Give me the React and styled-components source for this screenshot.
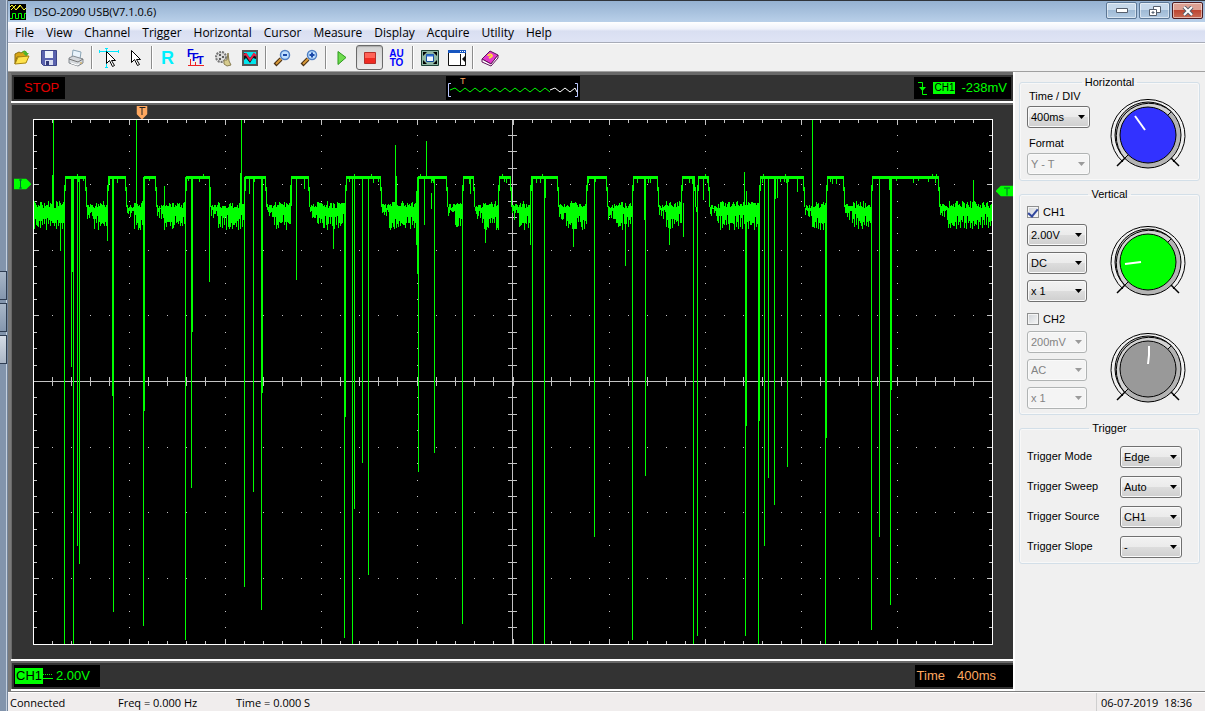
import React, { useState } from 'react';
import styled, { createGlobalStyle, css } from 'styled-components';

const GlobalStyle = createGlobalStyle`
  * { box-sizing: border-box; }
  body { margin: 0; background: #f0f0f0; }
  button, select, input { font: inherit; margin: 0; }
`;

const uiFont = '"Open Sans", "Noto Sans", sans-serif';
const panelFont = '"Liberation Sans", Arial, sans-serif';
const green = '#00ff00';

/* ---------- window frame ---------- */

const Screen = styled.div`
  display: flex;
  min-height: 100vh;
  font: 12px/16px ${uiFont};
  color: #000;
`;

const DesktopEdge = styled.div`
  flex: 0 0 8px;
  display: flex;
  flex-direction: column;
  gap: 3px;
  padding-top: 271px;
  background: linear-gradient(90deg, #8294ac 0 6px, #c3cfde 6px 7px, #74859c 7px);
`;

const EdgeTab = styled.span`
  height: 29px;
  width: 7px;
  border: 1px solid #2f3d52;
  border-left: 0;
  background: ${props => props.$lit ? 'linear-gradient(#d5dce6, #aab6c6)' : 'linear-gradient(#a9b7c8, #8496ae)'};
`;

const Window = styled.div`
  flex: 1;
  min-width: 0;
  display: flex;
  flex-direction: column;
  background: #f0f0f0;
`;

const TitleBar = styled.header`
  display: flex;
  align-items: center;
  gap: 8px;
  height: 22px;
  padding: 0 2px;
  border-top: 1px solid #30343a;
  background: linear-gradient(#95b1d1, #b9d0e9);
`;

const Title = styled.h1`
  flex: 1;
  margin: 0;
  font-size: 11px;
  font-weight: 400;
`;

const WindowButtons = styled.div`
  display: flex;
  gap: 2px;
  padding-bottom: 2px;
`;

const WindowButton = styled.button`
  display: flex;
  align-items: center;
  justify-content: center;
  width: 31px;
  height: 17px;
  padding: 0;
  border: 1px solid ${props => props.$close ? '#4c1a20' : '#5c7795'};
  border-radius: 2px;
  box-shadow: inset 0 0 0 1px rgba(255, 255, 255, 0.5);
  background: ${props => props.$close
    ? 'linear-gradient(#dca093 0 45%, #bd4632 50%, #c96b55)'
    : 'linear-gradient(#c6d8ea 0 45%, #9fbad5 50%, #b3cbe3)'};
`;

const MenuBar = styled.nav`
  display: flex;
  align-items: center;
  gap: 12px;
  height: 21px;
  padding: 1px 7px 0;
  background: linear-gradient(#fff, #eef1fa 35%, #d9dff1 45%, #dfe4f5);
  border-bottom: 1px solid #a8acb8;
`;

const MenuItem = styled.button`
  padding: 0;
  border: 0;
  background: none;
  color: #000;
`;

const ToolBar = styled.div`
  display: flex;
  align-items: center;
  height: 28px;
  border-top: 1px solid #fff;
`;

const ToolButton = styled.button`
  display: flex;
  align-items: center;
  justify-content: center;
  width: 27px;
  height: 25px;
  padding: 0;
  border: 1px solid transparent;
  border-radius: 3px;
  background: none;
  svg { overflow: visible; }
  ${props => props.$pressed && css`
    border-color: #6a6a6a;
    background: linear-gradient(#d2d2d2, #ececec);
    box-shadow: inset 0 1px 1px #aaa;
  `}
`;

const ToolText = styled.span`
  font: bold 10px/9px ${panelFont};
  color: #0000ff;
  text-align: center;
`;

const Separator = styled.span`
  width: 6px;
  height: 23px;
  background: linear-gradient(90deg, transparent 2px, #8c8c8c 2px 3px, #fff 3px 4px, transparent 4px);
`;

/* ---------- scope ---------- */

const Body = styled.main`
  flex: 1;
  display: grid;
  grid-template-columns: minmax(0, 1fr) 192px;
  border-top: 1px solid #a0a0a0;
`;

const Scope = styled.section`
  display: flex;
  flex-direction: column;
  gap: 2px;
  padding-bottom: 2px;
  border-top: 1px solid #696969;
  border-left: 3px solid #7a7a7a;
  background: #fff;
  font: 13px/16px ${panelFont};
`;

const Strip = styled.div`
  display: grid;
  grid-template-columns: 1fr auto 1fr;
  align-items: center;
  height: 28px;
  padding: 0 ${props => props.$right || 0}px 0 2px;
  border-top: 2px solid #696969;
  border-left: 1px solid #696969;
  background: #333;
  > :last-child { grid-column: 3; justify-self: end; }
`;

const Readout = styled.div`
  display: flex;
  align-items: center;
  justify-self: start;
  height: 22px;
  gap: ${props => props.$gap || 0}px;
  padding: 0 ${props => props.$padRight || 0}px 0 ${props => props.$padLeft || 0}px;
  background: #000;
  color: ${props => props.$color || green};
`;

const Badge = styled.span`
  background: ${green};
  color: #000;
  padding: 0 1px;
  font-size: ${props => props.$small ? 10 : 13}px;
  line-height: ${props => props.$small ? 12 : 16}px;
`;

const PlotPanel = styled.div`
  flex: 1;
  display: flex;
  padding: 14px 20px 14px 21px;
  border-top: 2px solid #696969;
  border-left: 1px solid #696969;
  background: #333;
`;

const Plot = styled.div`
  position: relative;
  flex: 1;
  align-self: flex-start;
  background: #000;
`;

const Trace = styled.svg`
  display: block;
  width: 100%;
  height: 526px;
`;

// level and time flags ride on the plot's edges
const Flag = styled.svg`
  position: absolute;
  ${props => props.$edge === 'top' && css`left: 109px; bottom: 100%; transform: translateX(-50%);`}
  ${props => props.$edge === 'left' && css`right: 100%; top: 65px; margin-right: 2px; transform: translateY(-50%);`}
  ${props => props.$edge === 'right' && css`left: 100%; top: 72px; margin-left: 3px; transform: translateY(-50%);`}
`;

/* ---------- side panel ---------- */

const Side = styled.aside`
  display: flex;
  flex-direction: column;
  gap: 6px;
  padding: 3px 5px 0 4px;
  border-left: 2px solid #fff;
  font: 11px/14px ${panelFont};
`;

const Group = styled.fieldset`
  min-width: 0;
  margin: 0;
  padding: ${props => props.$top || 0}px 7px 5px;
  border: 1px solid #d3dfe8;
  border-radius: 3px;
  box-shadow: inset 0 0 0 1px #f8f8f8;
`;

const Legend = styled.legend`
  margin: 0 auto;
  padding: 0 3px;
`;

const Block = styled.div`
  display: flex;
  justify-content: space-between;
  align-items: flex-end;
  padding-right: 6px;
  & + & { margin-top: 11px; }
`;

const Stack = styled.div`
  display: flex;
  flex-direction: column;
  gap: ${props => props.$gap}px;
`;

const Field = styled.div`
  display: flex;
  flex-direction: column;
  gap: 3px;
  label { padding-left: 2px; }
`;

const CheckRow = styled.label`
  display: flex;
  align-items: center;
  gap: 4px;
  height: 12px;
`;

const CheckBox = styled.input`
  appearance: none;
  display: grid;
  place-items: center;
  width: 12px;
  height: 12px;
  border: 1px solid #8e8f8f;
  box-shadow: inset 0 0 0 1px #f4f4f4;
  background: linear-gradient(135deg, #cfd3d8, #f6f6f6);
  &:checked::before {
    content: '';
    width: 4px;
    height: 8px;
    margin-bottom: 2px;
    border: solid #31479e;
    border-width: 0 2px 2px 0;
    transform: rotate(40deg);
  }
`;

const SelectBox = styled.span`
  display: grid;
  align-items: center;
  width: ${props => props.$width}px;
  > * { grid-area: 1 / 1; }
  > svg { justify-self: end; margin-right: 5px; pointer-events: none; }
`;

const Select = styled.select`
  appearance: none;
  width: 100%;
  height: 22px;
  padding: 0 14px 0 3px;
  border: 1px solid #707070;
  border-radius: 3px;
  box-shadow: inset 0 0 0 1px #fafafa;
  background: linear-gradient(#f2f2f2, #ebebeb 50%, #dddddd 50%, #cfcfcf);
  color: #000;
  &:disabled {
    opacity: 1;
    border-color: #b0b3b3;
    background: #f4f4f4;
    color: #838383;
  }
`;

const TriggerRow = styled.div`
  display: flex;
  justify-content: space-between;
  align-items: center;
  padding-right: 10px;
  height: 22px;
  label { padding-bottom: 2px; }
`;

const StatusBar = styled.footer`
  display: flex;
  align-items: center;
  height: 20px;
  padding-left: 2px;
  border-top: 1px solid #7c7c7c;
  box-shadow: inset 0 1px 0 #fff;
  background: #f0eded;
  font-size: 11px;
`;

const Status = styled.span`
  width: ${props => props.$width}px;
  padding-top: 2px;
`;

const Clock = styled.time`
  width: 109px;
  margin-left: auto;
  padding: 2px 0 0 4px;
  border-left: 1px solid #cfcfcf;
  white-space: pre;
`;

/* ---------- trace data ---------- */

const W = 960;
const H = 526;

const highs = [
  [32, 52], [75, 92], [111, 122], [153, 176], [212, 232], [258, 275],
  [313, 347], [385, 413], [430, 440], [466, 477], [498, 524], [554, 573],
  [600, 624], [649, 661], [665, 675], [727, 770], [794, 810], [839, 905]
];

// [x, from, to]
const spikes = [
  [20, 0, 90], [19, 56, 90], [103, 0, 90], [208, 0, 90], [207, 54, 90], [362, 26, 90],
  [363, 57, 90], [393, 22, 58], [711, 53, 90], [713, 72, 90], [779, 0, 90], [940, 61, 90],
  [131, 67, 90], [398, 74, 90],
  [27, 84, 132], [31, 84, 525], [38, 58, 248], [39, 58, 153], [40, 58, 525], [44, 58, 427],
  [46, 58, 445], [74, 84, 122], [79, 58, 277], [80, 58, 493], [110, 58, 507], [111, 58, 292],
  [152, 58, 521], [158, 58, 369], [159, 58, 213], [176, 58, 163], [211, 58, 468],
  [216, 58, 75], [220, 58, 373], [228, 58, 491], [229, 58, 274], [258, 58, 87], [263, 58, 161],
  [271, 58, 70], [300, 84, 130], [311, 84, 519], [312, 84, 298], [319, 58, 525], [321, 58, 390],
  [329, 58, 344], [335, 58, 456], [383, 72, 126], [384, 58, 155], [385, 58, 353], [391, 58, 106],
  [401, 58, 334], [429, 78, 505], [437, 58, 75], [452, 84, 124], [497, 84, 126], [499, 58, 525],
  [511, 58, 525], [512, 58, 79], [540, 84, 128], [561, 58, 418], [592, 84, 147], [599, 78, 521],
  [611, 58, 101], [612, 58, 357], [636, 84, 126], [650, 84, 118], [660, 58, 525], [664, 88, 517],
  [670, 58, 81], [712, 90, 517], [713, 90, 307], [725, 84, 525], [726, 84, 302], [731, 58, 427],
  [735, 58, 359], [741, 58, 386], [742, 58, 80], [744, 58, 79], [754, 58, 348], [764, 58, 73],
  [792, 84, 525], [793, 84, 319], [838, 84, 511], [846, 58, 418], [856, 58, 71], [857, 58, 486],
  [858, 58, 271]
];

function buildTrace() {
  let seed = 2090;
  const rand = () => {
    seed = (seed * 16807) % 2147483647;
    return seed / 2147483647;
  };
  let d = '';
  let sinceHigh = 20;
  for (let x = 1; x < W - 1; x++) {
    const high = highs.find(([a, b]) => x >= a && x <= b);
    let top = 57;
    let bottom = 60;
    if (high) {
      if (x === high[0] || x === high[1]) bottom = 72;
      else if (rand() > 0.88) bottom = 62 + Math.round(rand() * 3);
      else if (rand() > 0.95) top = 55;
      sinceHigh = 0;
    } else {
      sinceHigh++;
      const rising = highs.some(([a]) => a - x === 1);
      top = 82 + Math.round(rand() * 7);
      bottom = x % 2 || rand() > 0.7 ? 103 + Math.round(rand() * 8) : 95 + Math.round(rand() * 10);
      if (sinceHigh === 1) { top = 68; bottom = 88; }
      else if (sinceHigh < 9) { top = 85 + Math.round(rand() * 4); bottom = 90 + Math.round(rand() * 11); }
      if (rising) top = 66;
    }
    d += `M${x}.5 ${top}V${bottom}`;
  }
  spikes.forEach(([x, from, to]) => { d += `M${x}.5 ${from}V${to}`; });
  return d;
}

function buildGrid() {
  let ticks = '';
  let dots = '';
  const cols = Array.from({ length: 49 }, (_, i) => Math.floor((i + 1) * 19.2));
  const rows = Array.from({ length: 31 }, (_, i) => Math.floor((i + 1) * 16.41));
  cols.forEach((x, i) => {
    const len = (i + 1) % 5 === 0 ? 6 : 4;
    ticks += `M${x}.5 0v${len}M${x}.5 ${H}v-${len}M${x}.5 258v9`;
    rows.forEach((y, j) => {
      if ((i + 1) % 5 === 0 || (j + 1) % 4 === 0) dots += `M${x} ${y}.5h1`;
    });
  });
  rows.forEach((y, j) => {
    const len = (j + 1) % 4 === 0 ? 6 : 4;
    ticks += `M0 ${y}.5h${len}M${W} ${y}.5h-${len}M475 ${y}.5h9`;
  });
  return ticks + dots;
}

const tracePath = buildTrace();
const gridPath = buildGrid();

const zigzag = (from, to) => {
  let d = `M${from} 14`;
  for (let x = from, i = 0; x < to; x += 5, i++) d += `L${Math.min(x + 5, to)} ${i % 2 ? 16 : 12}`;
  return d;
};

/* ---------- icons ---------- */

const Icon = ({ children, size = 18 }) => (
  <svg width={size} height={size} viewBox={`0 0 ${size} ${size}`} aria-hidden="true">{children}</svg>
);

const pointer = 'M.5 .5v12l3-3 3 6 2-1-3-5h4z';

const icons = {
  open: <Icon><path d="M2 5l4-2 2 1 4-2 2 3v3H4L2 15z" fill="#d9a514" stroke="#8a6d10" /><path d="M2 15L5 8l11-1-3 7z" fill="#ffe34d" stroke="#a8860f" /><path d="M8 4c3-4 6-2 6 0h2l-3 3-3-3h2c-1-1-2-1-4 0z" fill="#4bb52c" /></Icon>,
  save: <Icon><path d="M1.500 1.500h15v15h-13l-2-2z" fill="#5a62ae" stroke="#3d4588" /><path d="M5 2h8v7H5z" fill="#eef2fb" /><path d="M5 11h8v5H5z" fill="#d7dcf0" /><path d="M6 12h3v4H6z" fill="#343b78" /></Icon>,
  print: <Icon><path d="M5 9L6 1l8 2-1 7z" fill="#e9f4fc" stroke="#8aa4b5" /><path d="M2 9l4-2 10 3v4l-5 3-9-3z" fill="#d4d8dc" stroke="#858b91" /><path d="M2 10l9 3 5-3" fill="none" stroke="#777" /><path d="M4 14l6 2 2-1" stroke="#fff" fill="none" /><path d="M13 14h2" stroke="#d3a13a" /></Icon>,
  cross: <Icon size={20}><path d="M0 3.500h20M7.500 0v20M6 .5h3M6 19.500h3M.5 2v3M19.500 2v3" stroke="#00e8ff" /><path d={pointer} transform="translate(7 3)" fill="#fff" stroke="#000" /></Icon>,
  arrow: <Icon><path d={pointer} transform="translate(4 1)" fill="#fff" stroke="#000" /></Icon>,
  r: <Icon><text x="1" y="15" fontFamily="Liberation Sans, Arial, sans-serif" fontSize="18" fontWeight="bold" fill="#00f0ff">R</text></Icon>,
  fft: <Icon><g fontFamily="Liberation Sans, Arial, sans-serif" fontSize="11" fontWeight="bold" fill="#0000e0"><text x="0" y="8">F</text><text x="5" y="12">F</text><text x="10" y="15">T</text></g><path d="M1 16.500h16M3.500 10v6M8.500 13v3" stroke="#e22" /></Icon>,
  gear: <Icon><circle cx="7" cy="8" r="5" fill="#ddd" stroke="#777" strokeWidth="2" strokeDasharray="2 1" /><circle cx="6" cy="6" r="1" fill="#333" /><circle cx="9" cy="8" r="1" fill="#333" /><circle cx="6" cy="10" r="1" fill="#333" /><path d="M10 11h3l1-7 1 8 2 4-4 1-3-2z" fill="#d7cc8e" stroke="#887d52" /></Icon>,
  chart: <Icon><path d="M2 2h14v14H2z" fill="#00e5ee" stroke="#555" strokeWidth="2" /><path d="M3 4l2 0 4 5 4-5 2 3v3l-3-1-3 5-4-5-2 2z" fill="#111" /><path d="M3 6l2-1 4 6 4-6 2 2" fill="none" stroke="#e8264a" strokeWidth="2" /></Icon>,
  zoomOut: <Icon><path d="M1 16l6-6" stroke="#4b3115" strokeWidth="4" /><path d="M2 15l5-5" stroke="#d99a38" strokeWidth="2" /><circle cx="11" cy="6" r="4.500" fill="#bfe0ff" stroke="#4f7fc4" strokeWidth="1.500" /><path d="M9 6h4" stroke="#1a49a8" strokeWidth="2" /></Icon>,
  zoomIn: <Icon><path d="M1 16l6-6" stroke="#4b3115" strokeWidth="4" /><path d="M2 15l5-5" stroke="#d99a38" strokeWidth="2" /><circle cx="11" cy="6" r="4.500" fill="#bfe0ff" stroke="#4f7fc4" strokeWidth="1.500" /><path d="M8.500 6h5M11 3.500v5" stroke="#1a49a8" strokeWidth="2" /></Icon>,
  play: <Icon><path d="M4 2.500l8 6-8 7z" fill="#6fdc4e" stroke="#2c9a1d" /></Icon>,
  stop: <Icon><path d="M3.500 3.500h11v11h-11z" fill="#ef2b22" stroke="#b5302a" /><path d="M4 4h10v5H4z" fill="#ff6357" /></Icon>,
  full: <Icon><path d="M.5 1.500h17v15H.5z" fill="#8fb7a4" stroke="#1d4036" /><path d="M5.500 5.500h7v7h-7z" fill="#f4faff" stroke="#124a9e" /><path d="M5.500 6.500h7" stroke="#2e6fd4" strokeWidth="2" /><path d="M2 3h4L2 7zM16 3h-4l4 4zM2 15h4l-4-4zM16 15h-4l4-4z" fill="#000" /></Icon>,
  dock: <Icon><path d="M.5 1.500h17v15H.5z" fill="#fff" stroke="#111" /><path d="M0 2.500h18" stroke="#1756c0" strokeWidth="3" /><path d="M12.500 5v11" stroke="#111" /><path d="M17 7v6l-3-3z" fill="#111" /><path d="M12 2.500h1M14 2.500h1M16 2.500h1" stroke="#fff" /></Icon>,
  book: <Icon><path d="M1 10l8-8 8 4-7 9z" fill="#e03acb" stroke="#60105a" /><path d="M1 10l9 5 7-9v3l-7 8-9-4z" fill="#fff" stroke="#60105a" /><path d="M7 7c1-3 6-1 3 1l-2 1" fill="none" stroke="#ffd83a" strokeWidth="2" /></Icon>
};

const AppLogo = () => (
  <svg width="16" height="16" viewBox="0 0 16 16" aria-hidden="true">
    <path d="M0 0h16v16H0z" fill="#000" />
    <path d="M0 3l2-2 4 5 4-5 4 5 2-2M1 6l5-5M6 6l5-5" fill="none" stroke="#ffff30" />
    <path d="M0 14.500h2.500v-5h3v5h3v-5h3v5h3v-5h2" fill="none" stroke={green} />
  </svg>
);

const Knob = ({ color, tip }) => (
  <svg width="76" height="78" viewBox="-38 -38 76 78" role="img" aria-label="Knob">
    <path d="M-25 27A37 36 0 1 1 25 27" fill="none" stroke="#000" />
    <circle r="33" fill="#b4b4b4" stroke="#000" />
    <path d="M-23.300 23.300A33 33 0 0 1 23.300 -23.300L20 -20L-20 20Z" fill="#d2d2d2" stroke="#000" />
    <circle r="28" fill={color} stroke="#000" />
    <path d="M-23 23L-31 31M23 23L31 31" stroke="#000" strokeWidth="1.500" />
    <path d={tip} stroke="#fff" strokeWidth="2" fill="none" />
  </svg>
);

/* ---------- controls ---------- */

const Combo = ({ id, label, value, options = [], width = 60, disabled }) => {
  const [current, setCurrent] = useState(value);
  return (
    <SelectBox $width={width}>
      <Select id={id} aria-label={label} value={current} disabled={disabled} onChange={e => setCurrent(e.target.value)}>
        {[value, ...options].map(option => <option key={option}>{option}</option>)}
      </Select>
      <svg width="7" height="4" viewBox="0 0 7 4" aria-hidden="true">
        <path d="M0 0h7L3.500 4z" fill={disabled ? '#9a9a9a' : '#000'} />
      </svg>
    </SelectBox>
  );
};

const Channel = ({ name, on, volts, coupling, color, tip }) => {
  const [enabled, setEnabled] = useState(on);
  return (
    <Block>
      <Stack $gap={6}>
        <CheckRow>
          <CheckBox type="checkbox" checked={enabled} onChange={() => setEnabled(!enabled)} />
          {name}
        </CheckRow>
        <Combo label={`${name} volts per division`} value={volts} options={['1.00V', '5.00V']} disabled={!enabled} />
        <Combo label={`${name} coupling`} value={coupling} options={['GND']} disabled={!enabled} />
        <Combo label={`${name} probe`} value="x 1" options={['x 10']} disabled={!enabled} />
      </Stack>
      <Knob color={color} tip={tip} />
    </Block>
  );
};

const menus = ['File', 'View', 'Channel', 'Trigger', 'Horizontal', 'Cursor', 'Measure', 'Display', 'Acquire', 'Utility', 'Help'];

const toolGroups = [
  ['open', 'save', 'print'],
  ['cross', 'arrow'],
  ['r', 'fft', 'gear', 'chart'],
  ['zoomOut', 'zoomIn'],
  ['play', 'stop', 'auto'],
  ['full', 'dock'],
  ['book']
];

const triggers = [
  ['Trigger Mode', 'Edge'],
  ['Trigger Sweep', 'Auto'],
  ['Trigger Source', 'CH1'],
  ['Trigger Slope', '-']
];

const App = () => (
  <Screen>
    <GlobalStyle />
    <DesktopEdge>
      <EdgeTab />
      <EdgeTab />
      <EdgeTab $lit />
    </DesktopEdge>
    <Window>
      <TitleBar>
        <AppLogo />
        <Title>DSO-2090 USB(V7.1.0.6)</Title>
        <WindowButtons>
          <WindowButton aria-label="Minimize">
            <svg width="12" height="5" viewBox="0 0 12 5"><path d="M.5 .5h11v4H.5z" fill="#fff" stroke="#555e6c" /></svg>
          </WindowButton>
          <WindowButton aria-label="Restore">
            <svg width="12" height="12" viewBox="0 0 12 12"><path d="M4.500 1.500h7v6h-7z" fill="#fff" stroke="#555e6c" /><path d="M.5 4.500h7v6h-7z" fill="#fff" stroke="#555e6c" /><path d="M3 7h2v1H3z" fill="#9fbad5" stroke="#555e6c" /></svg>
          </WindowButton>
          <WindowButton $close aria-label="Close">
            <svg width="12" height="10" viewBox="0 0 12 10"><path d="M2 1l8 8M10 1L2 9" stroke="#555e6c" strokeWidth="4" /><path d="M2 1l8 8M10 1L2 9" stroke="#fff" strokeWidth="2" /></svg>
          </WindowButton>
        </WindowButtons>
      </TitleBar>

      <MenuBar>
        {menus.map(menu => <MenuItem key={menu}>{menu}</MenuItem>)}
      </MenuBar>

      <ToolBar>
        {toolGroups.map((group, i) => (
          <React.Fragment key={group[0]}>
            {i > 0 && <Separator />}
            {group.map(tool => (
              <ToolButton key={tool} aria-label={tool} $pressed={tool === 'stop'}>
                {tool === 'auto' ? <ToolText>AU<br />TO</ToolText> : icons[tool]}
              </ToolButton>
            ))}
          </React.Fragment>
        ))}
      </ToolBar>

      <Body>
        <Scope>
          <Strip $right={2}>
            <Readout $color="#e00000" $padLeft={10} $padRight={6}>STOP</Readout>
            <svg width="134" height="24" viewBox="0 0 134 24" aria-hidden="true">
              <path d="M0 0h134v24H0z" fill="#000" />
              <path d="M5 7.500H2.500v13H5M129 7.500h2.500v13H129" fill="none" stroke="#b9c7ff" />
              <path d={zigzag(4, 104)} fill="none" stroke={green} />
              <path d={zigzag(104, 131)} fill="none" stroke="#fff" />
              <text x="14" y="8" fontFamily="Liberation Sans, Arial, sans-serif" fontSize="9" fill="#ffa860">T</text>
            </svg>
            <Readout $gap={6} $padLeft={4} $padRight={4}>
              <svg width="9" height="15" viewBox="0 0 9 15" aria-hidden="true">
                <path d="M0 1.500h4.500v12H9" fill="none" stroke={green} />
                <path d="M1 6h7l-3.500 4z" fill={green} />
              </svg>
              <Badge $small>CH1</Badge>
              <span>-238mV</span>
            </Readout>
          </Strip>

          <PlotPanel>
            <Plot>
              <Trace viewBox={`0 0 ${W} ${H}`} preserveAspectRatio="none" shapeRendering="crispEdges" role="img" aria-label="CH1 waveform">
                <path d={gridPath} stroke="#c4c4c4" fill="none" />
                <path d="M479.500 0V526M0 262.500H960" stroke="#c4c4c4" />
                <path d={tracePath} stroke={green} fill="none" />
                <path d="M.5 .5h959v525H.5z" fill="none" stroke="#fff" />
              </Trace>
              <Flag $edge="top" width="11" height="13" viewBox="0 0 11 13" aria-hidden="true">
                <path d="M0 0h11v8l-5 5h-1L0 8z" fill="#ffa860" />
                <path d="M3 1.500h6M5.500 2v7" stroke="#222" />
              </Flag>
              <Flag $edge="left" width="17" height="11" viewBox="0 0 17 11" aria-hidden="true">
                <path d="M0 0h12l5 5v1l-5 5H0z" fill={green} />
                <path d="M6.500 1v9M5 1.500h3M5 9.500h3" stroke="#063" />
              </Flag>
              <Flag $edge="right" width="17" height="11" viewBox="0 0 17 11" aria-hidden="true">
                <path d="M17 0H5L0 5v1l5 5h12z" fill={green} />
                <path d="M8 2.500h6M11 3v7" stroke="#063" />
              </Flag>
            </Plot>
          </PlotPanel>

          <Strip>
            <Readout $padLeft={1} $padRight={10}>
              <Badge>CH1</Badge>
              <svg width="13" height="6" viewBox="0 0 13 6" aria-hidden="true">
                <path d="M0 1.500h10" stroke={green} strokeDasharray="1 1" />
                <path d="M0 5.500h10" stroke={green} />
              </svg>
              <span>2.00V</span>
            </Readout>
            <Readout $color="#ffa860" $gap={12} $padLeft={2} $padRight={17}>
              <span>Time</span>
              <span>400ms</span>
            </Readout>
          </Strip>
        </Scope>

        <Side>
          <Group>
            <Legend>Horizontal</Legend>
            <Block>
              <Stack $gap={8}>
                <Field>
                  <label htmlFor="timeDiv">Time / DIV</label>
                  <Combo id="timeDiv" width={63} value="400ms" options={['200ms', '1s']} />
                </Field>
                <Field>
                  <label htmlFor="format">Format</label>
                  <Combo id="format" width={63} value="Y - T" options={['X - Y']} disabled />
                </Field>
              </Stack>
              <Knob color="#3232ff" tip="M-13 -19L-3 -5" />
            </Block>
          </Group>

          <Group $top={5}>
            <Legend>Vertical</Legend>
            <Channel name="CH1" on volts="2.00V" coupling="DC" color={green} tip="M-23 2L-15 1L-7 0" />
            <Channel name="CH2" on={false} volts="200mV" coupling="AC" color="#999" tip="M1 -23L1 -14L0 -5" />
          </Group>

          <Group $top={11}>
            <Legend>Trigger</Legend>
            <Stack $gap={8}>
              {triggers.map(([name, value]) => (
                <TriggerRow key={name}>
                  <label htmlFor={name}>{name}</label>
                  <Combo id={name} width={62} value={value} />
                </TriggerRow>
              ))}
            </Stack>
          </Group>
        </Side>
      </Body>

      <StatusBar>
        <Status $width={108}>Connected</Status>
        <Status $width={118}>Freq = 0.000 Hz</Status>
        <Status $width={118}>Time = 0.000 S</Status>
        <Clock>06-07-2019  18:36</Clock>
      </StatusBar>
    </Window>
  </Screen>
);

export default App;
